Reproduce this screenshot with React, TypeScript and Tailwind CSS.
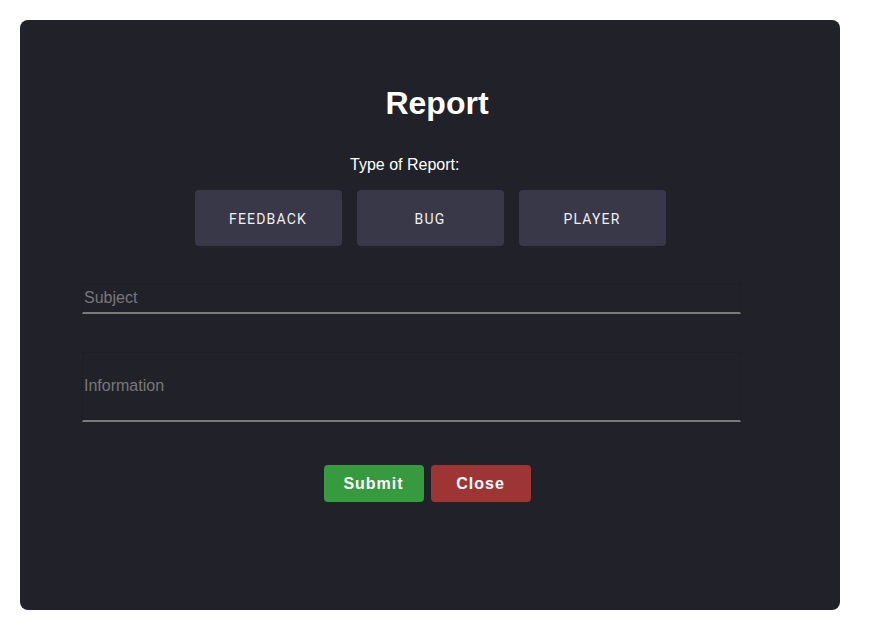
import { useState } from "react"

const types = ["Feedback", "Bug", "Player"]

export default function App() {
    const [type, setType] = useState<string | null>(null)

    return (
        <div className="min-h-screen bg-white p-5" style={{ fontFamily: "'Liberation Sans', Arial, sans-serif" }}>
            <div className="w-[820px] h-[590px] bg-[#21212a] rounded-lg flex flex-col">
                <h1 className="mt-[65px] pl-[14px] text-center text-white text-[32px] leading-[37px] font-bold">Report</h1>

                <div className="mt-[34px] pl-[330px] text-white text-base leading-[18px]">Type of Report:</div>

                <div className="mt-[16px] flex justify-center gap-[15px]">
                    {types.map(t => (
                        <button
                            key={t}
                            onClick={() => setType(t)}
                            className={`w-[147px] h-[56px] pt-[2px] rounded bg-[#383848] text-[#f0f0f0] text-[14px] font-normal uppercase tracking-[1.2px] ${type === t ? "ring-1 ring-white/40" : ""}`}
                            style={{ fontFamily: "Roboto, sans-serif" }}
                        >
                            {t}
                        </button>
                    ))}
                </div>

                <div className="mt-[37px] ml-[62px] w-[659px] flex flex-col">
                    <input
                        placeholder="Subject"
                        className="h-[31px] px-px bg-transparent border border-[#1e1e26] border-b-2 border-b-[#7a7a7a] text-base text-white placeholder:text-[#787878] outline-none"
                    />
                    <textarea
                        placeholder="Information"
                        className="mt-[38px] h-[70px] px-px pt-[24px] resize-none bg-transparent border border-[#1e1e26] border-b-2 border-b-[#7a7a7a] text-base leading-[18px] text-white placeholder:text-[#787878] outline-none"
                    />
                </div>

                <div className="mt-[43px] pr-[6px] flex justify-center gap-[7px]">
                    <button className="w-[100px] h-[37px] rounded bg-[#369a3e] text-white text-base font-bold tracking-[1px]">Submit</button>
                    <button className="w-[100px] h-[37px] rounded bg-[#9d3535] text-white text-base font-bold tracking-[1px]">Close</button>
                </div>
            </div>
        </div>
    )
}
